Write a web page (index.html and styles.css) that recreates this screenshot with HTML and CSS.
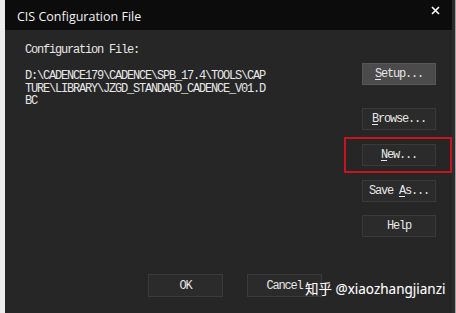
FILE: index.html
```html
<!DOCTYPE html>
<html>
<head>
<meta charset="utf-8">
<link rel="stylesheet" href="styles.css">
</head>
<body>
<div class="window">
  <div class="lstrip"></div>
  <div class="main">
    <div class="titlebar">
      <span class="title">CIS Configuration File</span>
      <svg class="close" width="9" height="9" viewBox="0 0 9 9"><path d="M1 1L8 8M8 1L1 8" stroke="#ffffff" stroke-width="1.6" fill="none"/></svg>
    </div>
    <div class="content">
      <div class="top">
        <div class="left">
          <div class="label">Configuration File:</div>
          <div class="path">D:\CADENCE179\CADENCE\SPB_17.4\TOOLS\CAP<br>TURE\LIBRARY\JZGD_STANDARD_CADENCE_V01.D<br>BC</div>
        </div>
        <div class="btns">
          <div class="btn default setup"><span><u>S</u>etup...</span></div>
          <div class="btn browse"><span><u>B</u>rowse...</span></div>
          <div class="btn new"><span><u>N</u>ew...</span><span class="mark"></span></div>
          <div class="btn saveas"><span>Save <u>A</u>s...</span></div>
          <div class="btn help"><span>Help</span></div>
        </div>
      </div>
      <div class="footer">
        <div class="btn wide"><span>OK</span></div>
        <div class="btn wide"><span>Cancel</span></div>
        <span class="watermark">知乎 @xiaozhangjianzi</span>
      </div>
    </div>
  </div>
  <div class="rstrip"></div>
</div>
</body>
</html>
```
FILE: styles.css
```css
html, body {
  margin: 0;
  padding: 0;
  background: #262626;
}
.window {
  display: flex;
  width: 456px;
  height: 313px;
  overflow: hidden;
}
.lstrip {
  width: 5px;
  background: #ececec;
}
.rstrip {
  width: 4px;
  background: linear-gradient(to right, #2c2c2c 0, #2c2c2c 3px, #a0a0a0 3px);
}
.main {
  flex: 1;
  display: flex;
  flex-direction: column;
  background: #262626;
}
.titlebar {
  height: 30px;
  background: #0c0c0c;
  display: flex;
  align-items: flex-start;
  justify-content: space-between;
  padding: 0 12px 0 12px;
}
.title {
  font-family: "Open Sans", "Noto Sans", sans-serif;
  font-size: 12.5px;
  color: #f2f2f2;
  margin-top: 9px;
  line-height: 16px;
}
.close {
  margin-top: 6px;
}
.content {
  flex: 1;
  display: flex;
  flex-direction: column;
  padding: 0 16px 16px 20px;
  font-family: "Liberation Mono", monospace;
  font-size: 12px;
  letter-spacing: -1.2px;
  color: #e6e6e6;
}
.top {
  display: flex;
  justify-content: space-between;
}
.label {
  margin-top: 14px;
  line-height: 12px;
}
.path {
  margin-top: 14px;
  line-height: 12.5px;
}
.btns {
  display: flex;
  flex-direction: column;
  width: 74px;
  padding-top: 33px;
}
.btn {
  box-sizing: border-box;
  height: 22px;
  border: 1px solid #3a3a3a;
  background: #2b2b2b;
  display: flex;
  align-items: center;
  justify-content: center;
  line-height: 12px;
  position: relative;
  white-space: pre;
}
.btn u {
  text-decoration-thickness: 1px;
  text-underline-offset: 2px;
}
.default {
  background: #4b4b4b;
  border-color: #575757;
}
.browse { margin-top: 23px; }
.new { margin-top: 14px; }
.saveas { margin-top: 14px; }
.help { margin-top: 13px; }
.mark {
  position: absolute;
  left: -19px;
  top: -8px;
  width: 104px;
  height: 32px;
  border: 2px solid #c8141e;
}
.footer {
  margin-top: auto;
  display: flex;
  gap: 24px;
  padding-left: 123px;
  position: relative;
}
.wide {
  width: 75px;
  height: 23px;
}
.watermark {
  position: absolute;
  left: 280px;
  top: 7px;
  font-family: "Noto Sans", "Noto Sans CJK SC", sans-serif;
  font-size: 13.5px;
  letter-spacing: 0;
  white-space: nowrap;
  color: #ffffff;
  line-height: 16px;
  text-shadow: 0 0 1px #555;
}
```
